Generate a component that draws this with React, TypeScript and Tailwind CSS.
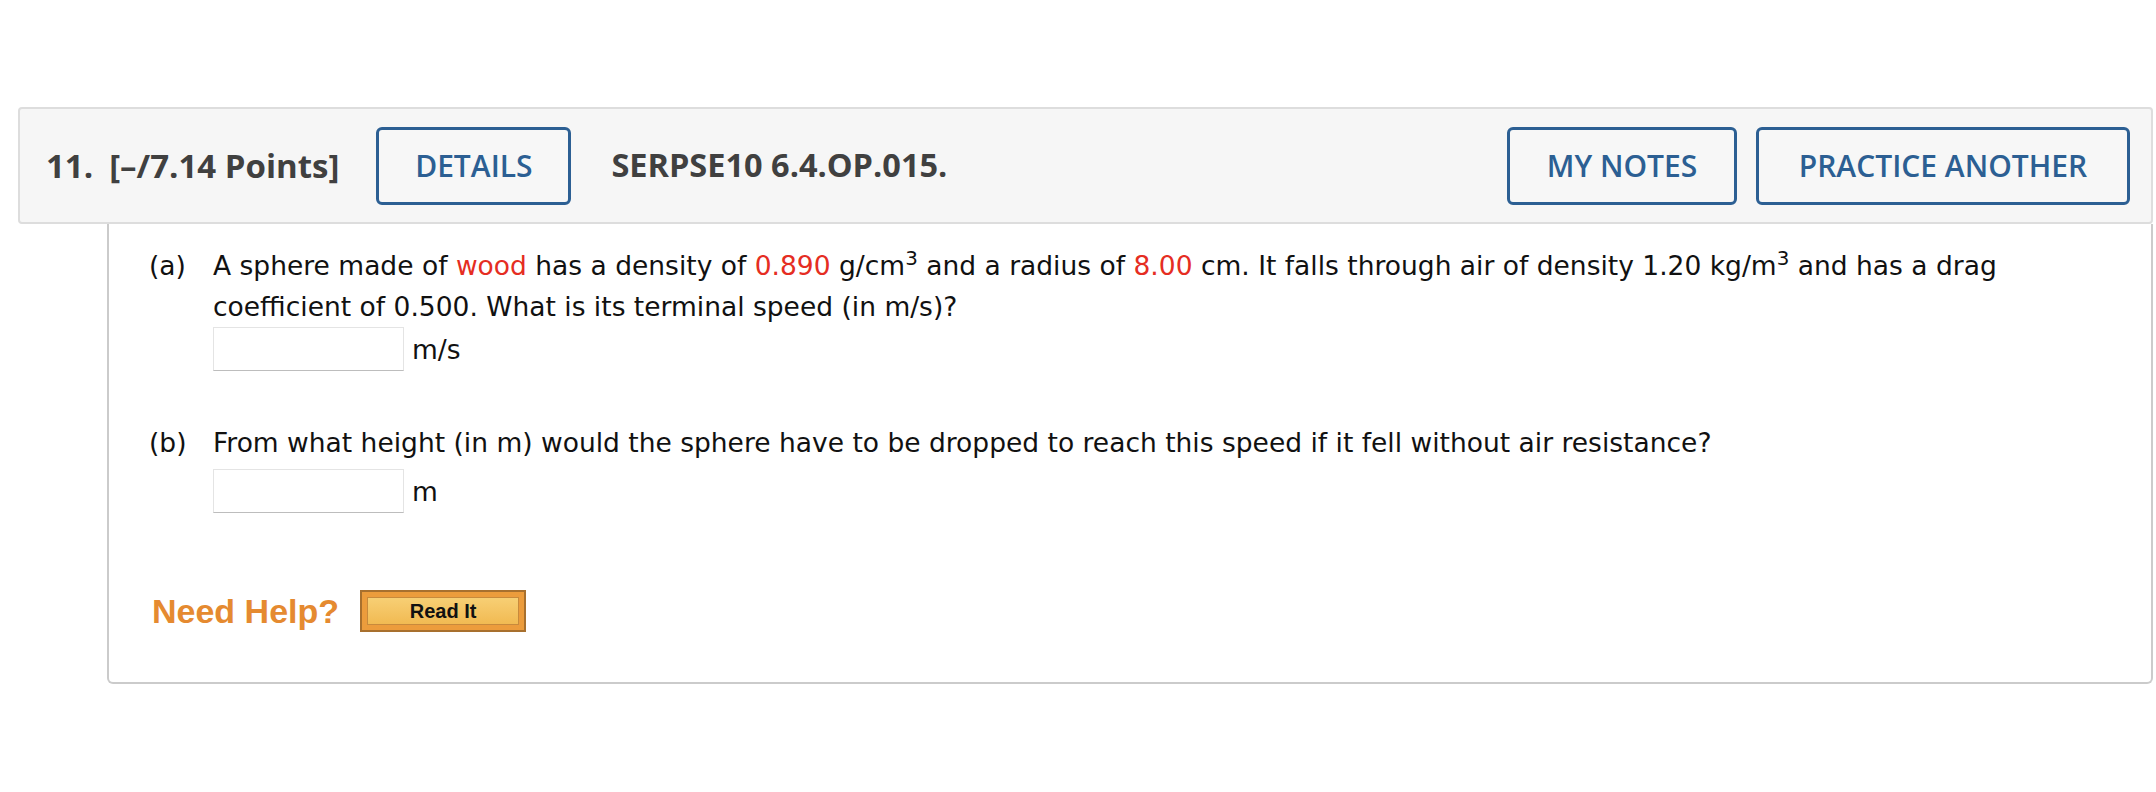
const headerFont = { fontFamily: '"Open Sans", "Liberation Sans", sans-serif' };

const Red = ({ children }: { children: React.ReactNode }) => (
  <span className="text-[#e52d22]">{children}</span>
);

const OutlineButton = ({ label, width }: { label: string; width: string }) => (
  <button
    className={`flex h-[78px] ${width} items-center justify-center rounded-[6px] border-[3px] border-[#2c5f93] bg-[#f7f7f7] text-[30px] font-semibold text-[#2c5f93]`}
  >
    {label}
  </button>
);

const AnswerBox = ({ unit, className }: { unit: string; className: string }) => (
  <div className={`flex items-center ${className}`}>
    <input
      type="text"
      className="h-[44px] w-[191px] border border-[#e4e4e4] border-b-[#bdbdbd] bg-white outline-none"
    />
    <span className="ml-[8px]">{unit}</span>
  </div>
);

export default function App() {
  return (
    <div className="min-h-[792px] bg-white pt-[107px] pl-[18px]">
      <div className="w-[2135px]">
        <div
          className="flex h-[117px] items-center rounded-[4px] border-2 border-[#dddddd] bg-[#f6f6f6] pl-[26px] pr-[21px] text-[#404040]"
          style={headerFont}
        >
          <span className="text-[33px] font-bold">11.</span>
          <span className="ml-[16px] text-[33px] font-bold">[–/7.14 Points]</span>
          <div className="ml-[37px]">
            <OutlineButton label="DETAILS" width="w-[195px]" />
          </div>
          <span className="ml-[40px] text-[32.5px] font-bold">SERPSE10 6.4.OP.015.</span>
          <div className="ml-auto flex gap-[19px]">
            <OutlineButton label="MY NOTES" width="w-[230px]" />
            <OutlineButton label="PRACTICE ANOTHER" width="w-[374px]" />
          </div>
        </div>

        <div
          className="ml-[89px] rounded-b-[6px] border-x-2 border-b-2 border-[#cbcbcb] pt-[21px] pl-[40px] pr-[60px] pb-[50px] text-[26.5px] leading-[41px] text-[#111]"
          style={{ fontFamily: '"DejaVu Sans", Verdana, sans-serif' }}
        >
          <div className="grid grid-cols-[64px_1fr]">
            <span>(a)</span>
            <div>
              <p>
                A sphere made of <Red>wood</Red> has a density of <Red>0.890</Red> g/cm<sup>3</sup> and a
                radius of <Red>8.00</Red> cm. It falls through air of density 1.20 kg/m<sup>3</sup> and has a
                drag coefficient of 0.500. What is its terminal speed (in m/s)?
              </p>
              <AnswerBox unit="m/s" className="mt-0" />
            </div>
          </div>

          <div className="mt-[51px] grid grid-cols-[64px_1fr]">
            <span>(b)</span>
            <div>
              <p>
                From what height (in m) would the sphere have to be dropped to reach this speed if it fell
                without air resistance?
              </p>
              <AnswerBox unit="m" className="mt-[6px]" />
            </div>
          </div>

          <div
            className="mt-[77px] flex h-[42px] items-center pl-[3px]"
            style={{ fontFamily: '"Liberation Sans", Arial, sans-serif' }}
          >
            <span className="text-[34px] font-bold text-[#e58a30]">Need Help?</span>
            <button className="ml-[21px] h-[42px] w-[166px] border-2 border-[#a8702e] bg-[#ec9c3c] p-[5px]">
              <span className="flex h-full w-full items-center justify-center border border-[#c88a3c] bg-gradient-to-b from-[#f7cf74] to-[#f1ba52] text-[20px] font-bold leading-none text-[#111]">
                Read It
              </span>
            </button>
          </div>
        </div>
      </div>
    </div>
  );
}
